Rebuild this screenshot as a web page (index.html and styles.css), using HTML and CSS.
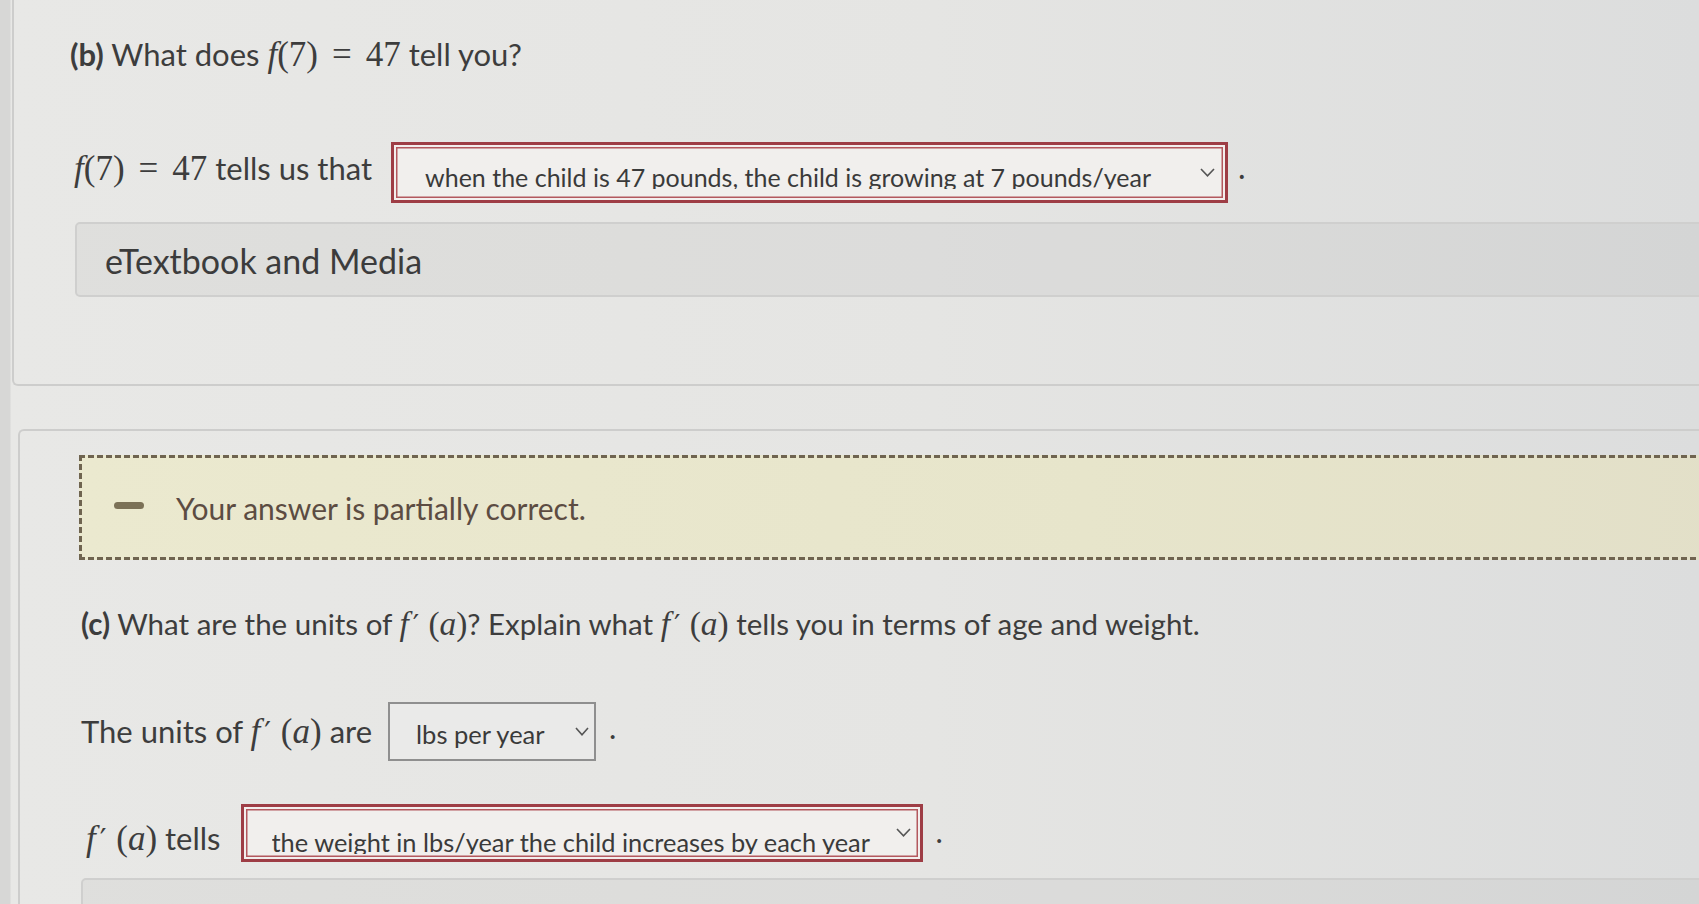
FILE: index.html
```html
<!DOCTYPE html>
<html lang="en">
<head>
<meta charset="utf-8">
<title>Question</title>
<link rel="stylesheet" href="styles.css">
</head>
<body>
<div class="page">
  <section class="card card-top">
    <p class="q q-b"><b>(b)</b> What does <span class="m"><i>f</i>(7)<span class="eq">=</span>47</span> tell you?</p>
    <div class="row row-b">
      <span class="lbl lbl-b"><span class="m"><i>f</i>(7)<span class="eq">=</span>47</span> tells us that</span>
      <div class="sel sel-err sel-1">
        <span class="sel-text clip">when the child is 47 pounds, the child is growing at 7 pounds/year</span>
        <svg class="chev" viewBox="0 0 15 9" width="15" height="9"><path d="M1 1 L7.5 7.8 L14 1" fill="none" stroke="#555" stroke-width="1.6"/></svg>
      </div>
      <span class="dot dot-b">.</span>
    </div>
    <div class="media">eTextbook and Media</div>
  </section>

  <section class="card card-bottom">
    <div class="feedback">
      <span class="minus"></span>
      <span class="fb-text">Your answer is partially correct.</span>
    </div>
    <p class="q q-c"><b>(c)</b> What are the units of <span class="m"><i>f</i><span class="pr">′</span> (<i>a</i>)</span>? Explain what <span class="m"><i>f</i><span class="pr">′</span> (<i>a</i>)</span> tells you in terms of age and weight.</p>
    <div class="row row-units">
      <span class="lbl lbl-units">The units of <span class="m"><i>f</i><span class="pr">′</span> (<i>a</i>)</span> are</span>
      <div class="sel sel-plain sel-2">
        <span class="sel-text">lbs per year</span>
        <svg class="chev" viewBox="0 0 14 9" width="14" height="9"><path d="M1 1 L7 7.8 L13 1" fill="none" stroke="#555" stroke-width="1.6"/></svg>
      </div>
      <span class="dot dot-units">.</span>
    </div>
    <div class="row row-tells">
      <span class="lbl lbl-tells"><span class="m"><i>f</i><span class="pr">′</span> (<i>a</i>)</span> tells</span>
      <div class="sel sel-err sel-3">
        <span class="sel-text clip">the weight in lbs/year the child increases by each year</span>
        <svg class="chev" viewBox="0 0 15 9" width="15" height="9"><path d="M1 1 L7.5 7.8 L14 1" fill="none" stroke="#555" stroke-width="1.6"/></svg>
      </div>
      <span class="dot dot-tells">.</span>
    </div>
    <div class="media media-c"></div>
  </section>
</div>
</body>
</html>
```

FILE: styles.css
```css
html, body {
  margin: 0;
  padding: 0;
  height: 100%;
  overflow: hidden;
}

body {
  font-family: Lato, "Open Sans", Arial, sans-serif;
  color: #3d3d3d;
  background: linear-gradient(90deg, #d7d7d6 0, #d7d7d6 10px, #e8e8e6 11px, #e5e5e3 55%, #dcdddd 100%);
}

.page {
  width: 1699px;
  height: 904px;
  overflow: hidden;
}

.card {
  margin-right: -30px;
  border-color: #cdcdcc;
  border-style: solid;
}

.card-top {
  margin-left: 12px;
  border-width: 0 0 2px 2px;
  border-bottom-left-radius: 6px;
  padding: 35px 0 87px 56px;
}

.card-bottom {
  margin-left: 18px;
  margin-top: 43px;
  border-width: 2px 0 0 2px;
  border-top-left-radius: 6px;
  padding: 24px 0 0 59px;
}

.q {
  margin: 0;
  white-space: nowrap;
}

.q-b {
  font-size: 31px;
  line-height: 38.4px;
}

.q b {
  font-weight: 700;
}

.m {
  font-family: "Liberation Serif", "DejaVu Serif", serif;
  font-size: 1.13em;
  line-height: 1;
}

.m i {
  font-style: italic;
}

.eq {
  margin: 0 0.4em;
}

.pr {
  font-family: "DejaVu Sans", "Liberation Sans", sans-serif;
  font-size: 0.85em;
  margin-left: 4px;
  margin-right: 1px;
}

.row {
  display: flex;
  align-items: center;
  white-space: nowrap;
}

.row-b {
  margin-top: 68.6px;
}

.lbl {
  font-size: 31px;
  line-height: 38.4px;
}

.lbl-b {
  margin-left: 4px;
  margin-right: 19px;
  margin-bottom: 8px;
}

.sel {
  box-sizing: border-box;
  display: flex;
  align-items: center;
  font-size: 25px;
  color: #3a3a3a;
}

.sel-err {
  border: 3px solid #9e3d45;
  box-shadow: inset 0 0 0 2px #f3eeed, inset 0 0 0 3.5px #b3585e;
  background: #f1efed;
}

.sel-plain {
  border: 2px solid #8f8f8f;
  background: #eaeae9;
}

.sel-text {
  flex: 1;
  min-width: 0;
  overflow: hidden;
  line-height: 32px;
}

.sel-text.clip {
  height: 28px;
}

.chev {
  flex: none;
}

.sel-1 {
  width: 837px;
  height: 61px;
  padding-left: 31px;
}

.sel-1 .sel-text {
  margin-top: 4px;
}

.sel-1 .chev {
  margin-right: 10px;
}

.dot {
  font-size: 32px;
  line-height: 38.4px;
}

.dot-b {
  margin-left: 10px;
  margin-bottom: 10px;
}

.media {
  margin: 19px -30px 0 5px;
  border: 2px solid #cfcfce;
  border-radius: 5px;
  background: rgba(0, 0, 0, 0.035);
  padding: 18px 0 15px 28px;
  font-size: 34px;
  line-height: 38.4px;
  color: #3c3c3c;
}

.feedback {
  box-sizing: border-box;
  height: 105px;
  margin-right: -30px;
  background:
    repeating-linear-gradient(90deg, #6f6450 0 6px, transparent 6px 9px) left top / 100% 3px no-repeat,
    repeating-linear-gradient(90deg, #6f6450 0 6px, transparent 6px 9px) left bottom / 100% 3px no-repeat,
    repeating-linear-gradient(180deg, #6f6450 0 6px, transparent 6px 9px) left top / 3px 100% no-repeat,
    linear-gradient(90deg, #ebe9cf 0%, #e7e5cb 60%, #e2dfc8 100%);
  display: flex;
  align-items: center;
  padding-left: 35px;
}

.minus {
  width: 30px;
  height: 7px;
  border-radius: 3.5px;
  background: #7b7157;
  margin-right: 32px;
  margin-bottom: 5px;
}

.fb-text {
  font-size: 30px;
  line-height: 36px;
  color: #5c4c42;
}

.q-c {
  margin: 44.4px 0 0 2px;
  font-size: 29.5px;
  line-height: 37.2px;
}

.row-units {
  margin-top: 60.4px;
}

.lbl-units {
  font-size: 31px;
  line-height: 37.2px;
  margin-left: 2px;
  margin-right: 16px;
}

.sel-2 {
  width: 208px;
  height: 59px;
  padding-left: 26px;
  font-size: 25.5px;
}

.sel-2 .sel-text {
  margin-top: 5px;
}

.sel-2 .chev {
  margin-right: 5px;
}

.dot-units {
  font-size: 31px;
  margin-left: 13px;
  margin-bottom: 10px;
}

.row-tells {
  margin-top: 42.4px;
}

.lbl-tells {
  font-size: 31px;
  line-height: 37.2px;
  margin-left: 7px;
  margin-right: 20px;
  margin-top: 12px;
}

.sel-3 {
  width: 682px;
  height: 58px;
  padding-left: 28px;
  font-size: 25.4px;
}

.sel-3 .sel-text {
  margin-top: 14px;
}

.sel-3 .chev {
  margin-right: 9px;
}

.dot-tells {
  font-size: 31px;
  margin-left: 13px;
  margin-bottom: 4px;
}

.media-c {
  margin: 16px -30px 0 2px;
  height: 80px;
  padding: 0;
}
```
